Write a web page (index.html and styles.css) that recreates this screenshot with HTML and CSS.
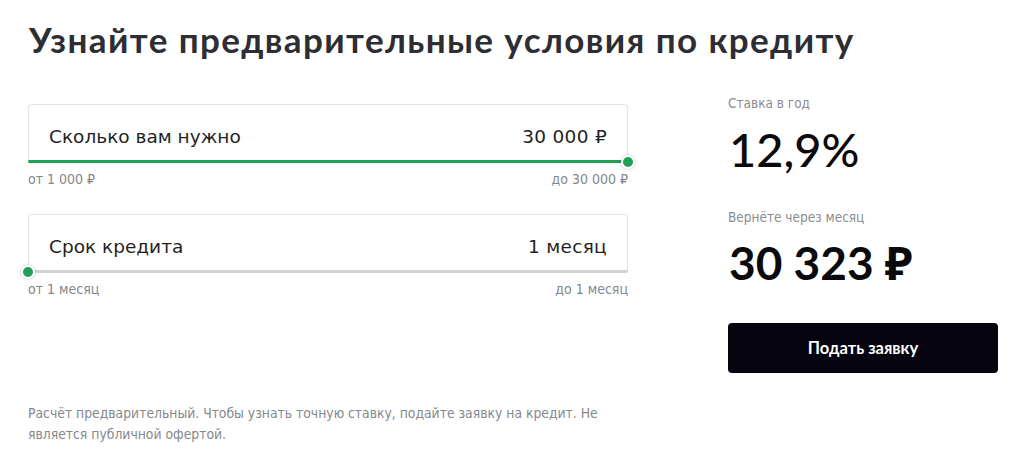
FILE: index.html
```html
<!DOCTYPE html>
<html lang="ru">
<head>
<meta charset="utf-8">
<title>Кредит</title>
<link rel="stylesheet" href="styles.css">
</head>
<body>
<div class="page">
  <h1 class="title">Узнайте предварительные условия по кредиту</h1>
  <div class="layout">
    <div class="fields">
      <div class="field">
        <div class="box">
          <span class="label">Сколько вам нужно</span>
          <span class="value">30 000 ₽</span>
        </div>
        <div class="track">
          <div class="fill" style="width:100%"></div>
          <div class="thumb" style="left:100%"></div>
        </div>
        <div class="hints"><span>от 1 000 ₽</span><span>до 30 000 ₽</span></div>
      </div>
      <div class="field">
        <div class="box">
          <span class="label">Срок кредита</span>
          <span class="value">1 месяц</span>
        </div>
        <div class="track">
          <div class="fill" style="width:0%"></div>
          <div class="thumb" style="left:0%"></div>
        </div>
        <div class="hints"><span>от 1 месяц</span><span>до 1 месяц</span></div>
      </div>
    </div>
    <div class="summary">
      <div class="stat">
        <div class="stat-label">Ставка в год</div>
        <div class="stat-value rate">12,9%</div>
      </div>
      <div class="stat">
        <div class="stat-label">Вернёте через месяц</div>
        <div class="stat-value sum">30 323 ₽</div>
      </div>
      <button class="apply">Подать заявку</button>
    </div>
  </div>
  <p class="note">Расчёт предварительный. Чтобы узнать точную ставку, подайте заявку на кредит. Не является публичной офертой.</p>
</div>
</body>
</html>
```
FILE: styles.css
```css
* { box-sizing: border-box; }
html, body { margin: 0; padding: 0; background: #fff; }
.page {
  padding: 17px 14px 0 28px;
  width: 1012px;
}
.title {
  margin: 0 0 0 1px;
  font-family: "Lato", "Noto Sans", sans-serif;
  font-weight: 700;
  font-size: 35px;
  line-height: 44px;
  color: #2d2e33;
  letter-spacing: 1.4px;
}
.layout {
  display: grid;
  grid-template-columns: 600px 270px;
  column-gap: 100px;
  margin-top: 43px;
}
.fields {
  display: flex;
  flex-direction: column;
  gap: 26px;
}
.field { position: relative; }
.box {
  height: 56px;
  border: 1px solid #e3e4e6;
  border-bottom: none;
  border-radius: 4px 4px 0 0;
  display: flex;
  align-items: center;
  justify-content: space-between;
  padding: 8px 20px 0 20px;
  font-family: "DejaVu Sans", sans-serif;
  font-size: 18.5px;
  color: #1f1f22;
}
.value { letter-spacing: 0.3px; }
.track {
  position: relative;
  height: 3px;
  background: #d2d3d7;
  border-radius: 0 0 2px 2px;
}
.fill {
  height: 100%;
  background: #21a155;
  border-radius: 2px;
}
.thumb {
  position: absolute;
  top: 50%;
  width: 14px;
  height: 14px;
  margin: -7px 0 0 -7px;
  border-radius: 50%;
  background: #21a155;
  border: 2px solid #fff;
  box-shadow: 0 0 3px rgba(0,0,0,0.25);
}
.hints {
  display: flex;
  justify-content: space-between;
  margin-top: 8px;
  font-family: "DejaVu Sans Condensed", "DejaVu Sans", sans-serif;
  font-size: 14px;
  line-height: 17px;
  color: #85878c;
}
.summary {
  display: flex;
  flex-direction: column;
}
.stat-label {
  font-family: "DejaVu Sans Condensed", "DejaVu Sans", sans-serif;
  font-size: 13.5px;
  line-height: 16px;
  color: #8b8d92;
  margin-top: -9px;
}
.stat-value {
  font-family: "Lato", "Noto Sans", sans-serif;
  color: #0a0a0c;
  line-height: 56px;
  margin-left: 1px;
}
.rate {
  font-size: 47px;
  font-weight: 500;
  margin-top: 10px;
}
.sum {
  font-size: 46px;
  font-weight: 700;
  margin-top: 10px;
}
.stat + .stat { margin-top: 41px; }
.apply {
  margin-top: 32px;
  height: 50px;
  width: 270px;
  border: none;
  border-radius: 4px;
  background: #05040f;
  color: #fff;
  font-family: "Lato", "Noto Sans", sans-serif;
  font-weight: 700;
  font-size: 16.5px;
}
.note {
  margin: 30px 0 0 0;
  max-width: 600px;
  font-family: "DejaVu Sans Condensed", "DejaVu Sans", sans-serif;
  font-size: 13.8px;
  line-height: 21px;
  color: #86888d;
}
```
